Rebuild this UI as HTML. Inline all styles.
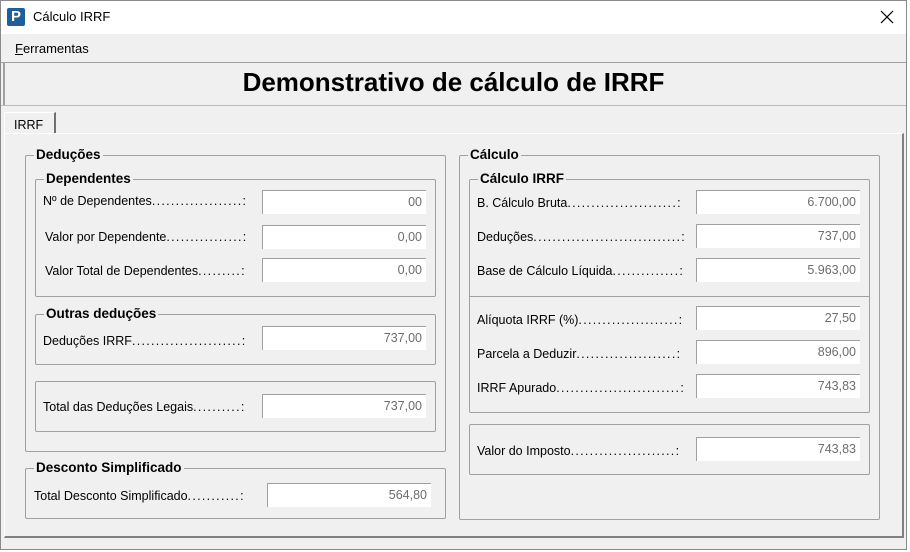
<!DOCTYPE html>
<html><head><meta charset="utf-8"><style>
*{box-sizing:border-box;margin:0;padding:0}
body{width:910px;height:552px;background:#fff;font-family:"Liberation Sans",sans-serif;font-size:12.5px;color:#000;position:relative;overflow:hidden}
.a{position:absolute}
.g{position:absolute;border:1px solid #a0a0a0;border-radius:2px}
.gt{position:absolute;top:-9px;left:8px;background:#f0f0f0;padding:0 2px;font-weight:bold;font-size:13.5px;line-height:16px}
.lb{position:absolute;white-space:nowrap;line-height:16px}
.lb i{font-style:normal;letter-spacing:1.3px}
.in{position:absolute;background:#fff;border-top:1px solid #a0a0a0;border-left:1px solid #a0a0a0;height:24px;width:164px;text-align:right;padding-right:4px;line-height:22px;color:#6d6d6d}
</style></head><body>
<div class="a" style="left:0;top:0;width:907px;height:550px;border:1px solid #8a8a8a;background:#f0f0f0"></div>
<div class="a" style="left:1px;top:1px;width:905px;height:33px;background:#fff"></div>
<div class="a" style="left:7px;top:8px;width:18px;height:18px;background:#1f5e9a;border-radius:2px;color:#fff;font-weight:bold;font-size:15px;line-height:18px;text-align:center">P</div>
<div class="lb" style="left:33px;top:9px;font-size:13px">Cálculo IRRF</div>
<svg class="a" style="left:880px;top:10px" width="14" height="14"><path d="M1 1L13 13M13 1L1 13" stroke="#000" stroke-width="1.2"/></svg>
<div class="lb" style="left:15px;top:41px;font-size:13px"><u>F</u>erramentas</div>
<div class="a" style="left:1px;top:62px;width:905px;height:1px;background:#a0a0a0"></div>
<div class="a" style="left:3px;top:63px;width:2px;height:43px;background:#a0a0a0"></div>
<div class="a" style="left:0;top:64px;width:907px;text-align:center;font-weight:bold;font-size:26px;line-height:36px">Demonstrativo de cálculo de IRRF</div>
<div class="a" style="left:1px;top:105px;width:905px;height:1px;background:#a7bfd6"></div>
<div class="a" style="left:4px;top:112px;width:52px;height:22px;border-right:2px solid #707070;border-left:1px solid #fff;border-top:1px solid #fff"></div>
<div class="lb" style="left:14px;top:117px">IRRF</div>
<div class="a" style="left:4px;top:133px;width:900px;height:405px;border:1px solid #fff;border-right:2px solid #808080;border-bottom:2px solid #808080"></div>

<div class="g" style="left:25px;top:155px;width:421px;height:297px"><div class="gt">Deduções</div></div>
<div class="g" style="left:35px;top:179px;width:401px;height:118px"><div class="gt">Dependentes</div></div>
<div class="lb" style="left:43px;top:193px">Nº de Dependentes<i>...................</i>:</div><div class="in" style="left:262px;top:190px">00</div>
<div class="lb" style="left:45px;top:229px">Valor por Dependente<i>................</i>:</div><div class="in" style="left:262px;top:225px">0,00</div>
<div class="lb" style="left:45px;top:263px">Valor Total de Dependentes<i>.........</i>:</div><div class="in" style="left:262px;top:258px">0,00</div>
<div class="g" style="left:35px;top:314px;width:401px;height:51px"><div class="gt">Outras deduções</div></div>
<div class="lb" style="left:43px;top:333px">Deduções IRRF<i>.......................</i>:</div><div class="in" style="left:262px;top:326px">737,00</div>
<div class="g" style="left:35px;top:381px;width:401px;height:51px"></div>
<div class="lb" style="left:43px;top:399px">Total das Deduções Legais<i>..........</i>:</div><div class="in" style="left:262px;top:394px">737,00</div>
<div class="g" style="left:25px;top:468px;width:421px;height:51px"><div class="gt">Desconto Simplificado</div></div>
<div class="lb" style="left:34px;top:488px">Total Desconto Simplificado<i>...........</i>:</div><div class="in" style="left:267px;top:483px">564,80</div>

<div class="g" style="left:459px;top:155px;width:421px;height:365px"><div class="gt">Cálculo</div></div>
<div class="g" style="left:469px;top:179px;width:401px;height:234px"><div class="gt">Cálculo IRRF</div></div>
<div class="a" style="left:470px;top:296px;width:399px;height:1px;background:#a0a0a0"></div>
<div class="lb" style="left:477px;top:195px">B. Cálculo Bruta<i>.......................</i>:</div><div class="in" style="left:696px;top:190px">6.700,00</div>
<div class="lb" style="left:477px;top:229px">Deduções<i>...............................</i>:</div><div class="in" style="left:696px;top:224px">737,00</div>
<div class="lb" style="left:477px;top:263px">Base de Cálculo Líquida<i>..............</i>:</div><div class="in" style="left:696px;top:258px">5.963,00</div>
<div class="lb" style="left:477px;top:312px">Alíquota IRRF (%)<i>.....................</i>:</div><div class="in" style="left:696px;top:306px">27,50</div>
<div class="lb" style="left:477px;top:346px">Parcela a Deduzir<i>.....................</i>:</div><div class="in" style="left:696px;top:340px">896,00</div>
<div class="lb" style="left:477px;top:380px">IRRF Apurado<i>..........................</i>:</div><div class="in" style="left:696px;top:374px">743,83</div>
<div class="g" style="left:469px;top:424px;width:401px;height:51px"></div>
<div class="lb" style="left:477px;top:443px">Valor do Imposto<i>......................</i>:</div><div class="in" style="left:696px;top:437px">743,83</div>
</body></html>
